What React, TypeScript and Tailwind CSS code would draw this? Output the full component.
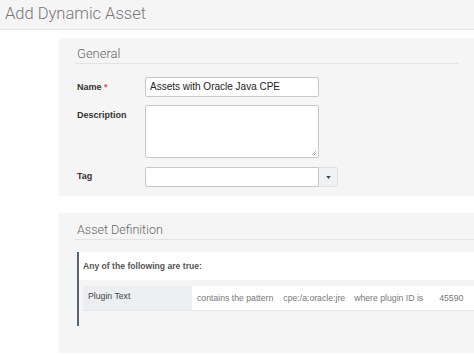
const sans = { fontFamily: '"Liberation Sans", Arial, sans-serif' }
const light = { fontFamily: 'Roboto, "Liberation Sans", sans-serif' }

function Field({ label, required, children }: { label: string; required?: boolean; children: React.ReactNode }) {
  return (
    <div className="flex items-start">
      <div className="w-[70px] pl-[2px] pt-[5px] text-[9px] font-bold text-[#333] leading-[11px]">
        {label}
        {required && <span className="text-[#d9534f]"> *</span>}
      </div>
      {children}
    </div>
  )
}

export default function App() {
  return (
    <div className="w-[474px] h-[355px] overflow-hidden bg-white" style={sans}>
      {/* Page header */}
      <div className="h-[30px] bg-[#f5f5f5] border-b border-[#e6e6e6] pl-[5px] pt-[3px]">
        <h1 className="text-[16.5px] font-light text-[#777] leading-[22px]" style={light}>
          Add Dynamic Asset
        </h1>
      </div>

      {/* General */}
      <section className="mt-[8px] ml-[59px] bg-[#f5f5f5] px-[16px] pb-[9px]">
        <div className="h-[26px] border-b border-[#e3e3e3] pl-[2px] pt-[9px]">
          <h2 className="text-[13px] font-light text-[#666] leading-[14px]" style={light}>
            General
          </h2>
        </div>
        <div className="flex flex-col gap-[8px] pt-[13px]">
          <Field label="Name" required>
            <div className="w-[174px] h-[20px] bg-white border border-[#c8c8c8] rounded-[2px] px-[4px] text-[10px] text-[#222] leading-[18px] whitespace-nowrap">
              Assets with Oracle Java CPE
            </div>
          </Field>
          <Field label="Description">
            <div className="relative w-[174px] h-[53px] bg-white border border-[#c8c8c8] rounded-[2px]">
              <svg className="absolute right-[1px] bottom-[1px]" width="6" height="6" viewBox="0 0 6 6">
                <path d="M5 1L1 5M5 3L3 5" stroke="#999" strokeWidth="0.8" />
              </svg>
            </div>
          </Field>
          <Field label="Tag">
            <div className="flex pt-[1px]">
              <div className="w-[174px] h-[20px] bg-white border border-[#c8c8c8] rounded-l-[2px]" />
              <div className="w-[19px] h-[20px] bg-[#f0f1f3] border border-l-0 border-[#e0e0e0] rounded-r-[2px] flex items-center justify-center">
                <svg width="5" height="3" viewBox="0 0 6 4">
                  <path d="M0 0H6L3 4Z" fill="#444" />
                </svg>
              </div>
            </div>
          </Field>
        </div>
      </section>

      {/* Asset Definition */}
      <section className="mt-[17px] ml-[59px] h-[140px] bg-[#f5f5f5] pl-[16px]">
        <div className="h-[27px] border-b border-[#e3e3e3] pl-[2px] pt-[10px]">
          <h2 className="text-[12.5px] font-light text-[#666] leading-[14px]" style={light}>
            Asset Definition
          </h2>
        </div>
        <div className="mt-[12px] ml-[2px] h-[74px] border-l-[2px] border-[#5a6470]">
          <div className="h-[28px] bg-white pl-[4px] pt-[9px] text-[8.6px] font-bold text-[#555] leading-[11px] whitespace-nowrap">
            Any of the following are true:
          </div>
          <div className="mt-[6px] ml-[4px] flex h-[25px] border-b border-[#e6e6e6] text-[8.7px] leading-[11px] whitespace-nowrap">
            <div className="w-[109px] bg-[#eceef0] pl-[5px] pt-[5px] text-[#444]">Plugin Text</div>
            <div className="flex-1 bg-white pl-[5px] pt-[7px] text-[#777] flex">
              <span>contains the pattern</span>
              <span className="ml-[10px]">cpe:/a:oracle:jre</span>
              <span className="ml-[9px]">where plugin ID is</span>
              <span className="ml-[16px]">45590</span>
            </div>
          </div>
        </div>
      </section>
    </div>
  )
}
